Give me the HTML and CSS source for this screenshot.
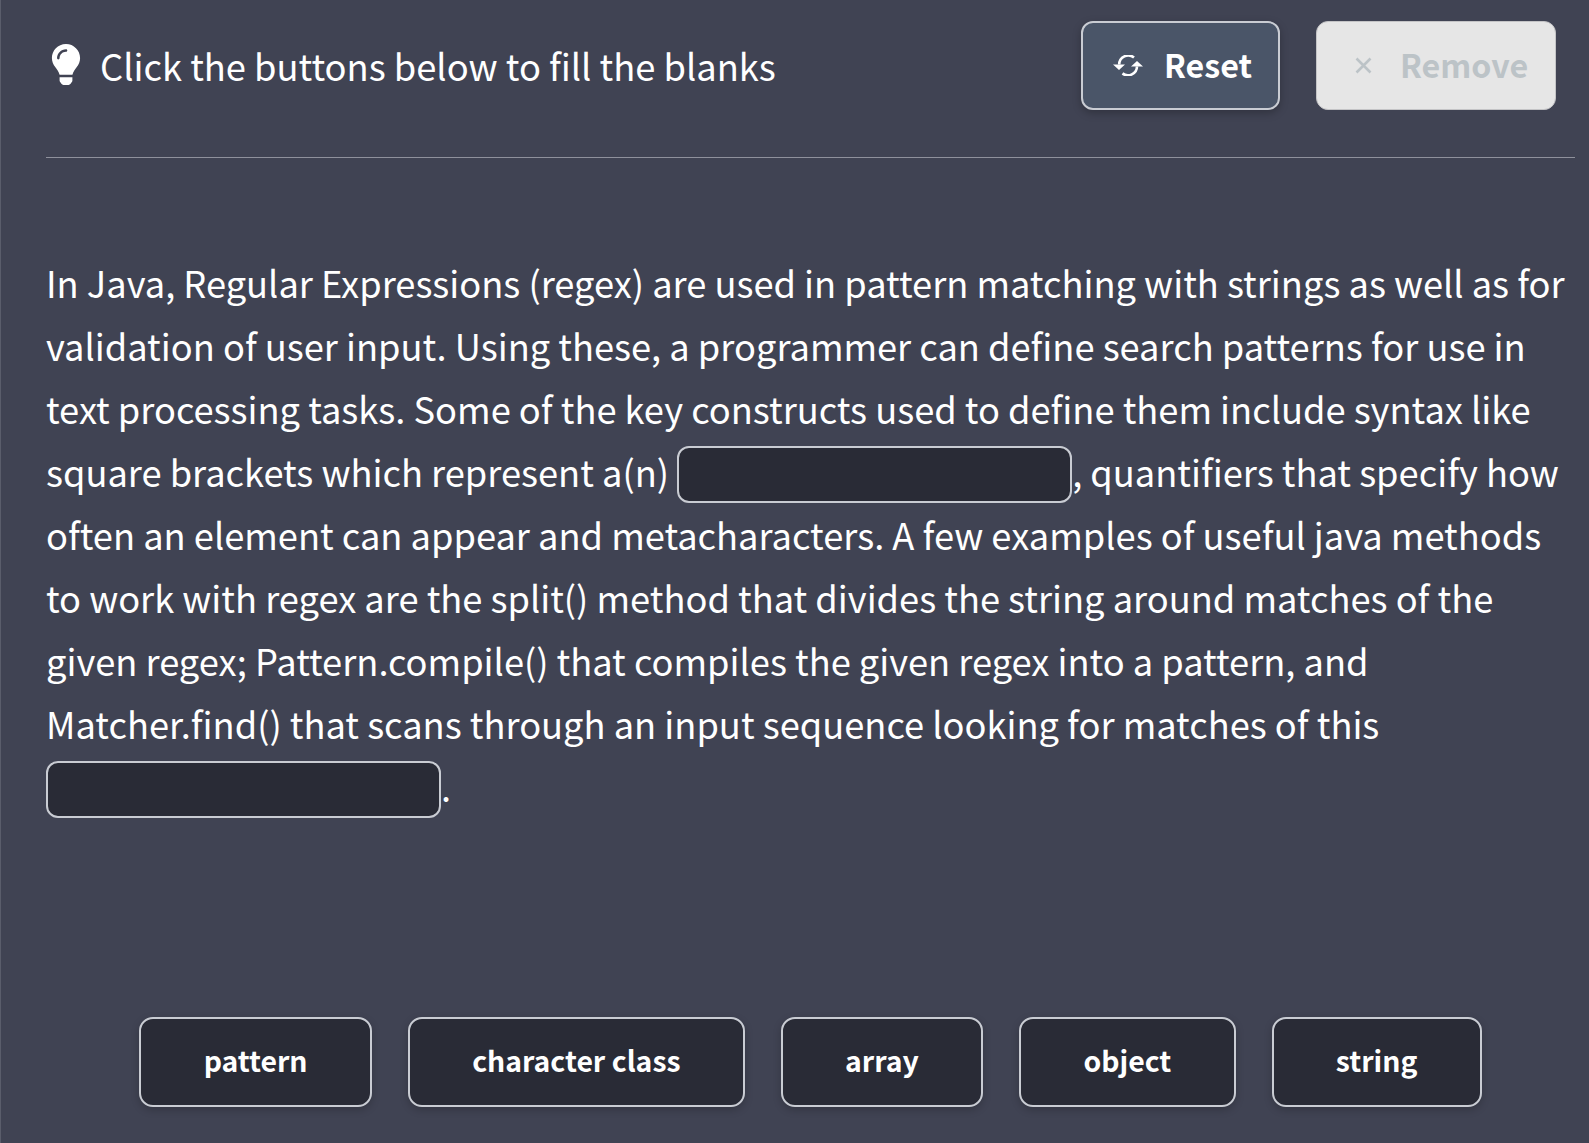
FILE: index.html
```html
<!DOCTYPE html>
<html lang="en">
<head>
  <meta charset="UTF-8" />
  <title>Fill in the blanks</title>
  <link rel="stylesheet" href="styles.css">
</head>
<body>
  <div class="exercise">
    <div class="toolbar">
      <div class="hint">
        <svg class="bulb" viewBox="0 0 352 512"><path d="M96.06 454.35c.01 6.29 1.87 12.45 5.36 17.69l17.09 25.69a31.99 31.99 0 0 0 26.64 14.28h61.71a31.99 31.99 0 0 0 26.64-14.28l17.09-25.69a31.989 31.989 0 0 0 5.36-17.69l.04-38.35H96.01l.05 38.35zM0 176c0 44.37 16.45 84.85 43.56 115.78 16.52 18.85 42.36 58.23 52.21 91.45.04.26.11.52.15.78h160.16c.04-.26.11-.51.15-.78 9.85-33.22 35.69-72.6 52.21-91.45C335.55 260.85 352 220.37 352 176 352 78.61 272.91-.3 175.45 0 73.44.31 0 82.97 0 176zm176-80c-44.11 0-80 35.89-80 80 0 8.84-7.16 16-16 16s-16-7.16-16-16c0-61.76 50.24-112 112-112 8.84 0 16 7.16 16 16s-7.16 16-16 16z"/></svg>
        <span>Click the buttons below to fill the blanks</span>
      </div>
      <div class="actions">
        <button class="action reset">
          <svg class="icon-sync" viewBox="0 0 30 21"><path d="M21 2.6A9 9 0 0 0 6.2 9.5"/><path d="M9.5 18.4A9 9 0 0 0 24 11.5"/><path class="solid" d="M0 9.5h12L6 15zM18 11.5h12L24 6z"/></svg>
          Reset
        </button>
        <button class="action remove" disabled>
          <svg class="icon-close" viewBox="0 0 17 17"><path d="M1.5 1.5l14 14M15.5 1.5l-14 14"/></svg>
          Remove
        </button>
      </div>
    </div>

    <p class="passage">In Java, Regular Expressions (regex) are used in pattern matching with strings as well as for validation of user input. Using these, a programmer can define search patterns for use in text processing tasks. Some of the key constructs used to define them include syntax like square brackets which represent a(n) <span class="blank"></span>, quantifiers that specify how often an element can appear and metacharacters. A few examples of useful java methods to work with regex are the split() method that divides the string around matches of the given regex; Pattern.compile() that compiles the given regex into a pattern, and Matcher.find() that scans through an input sequence looking for matches of this <span class="blank"></span>.</p>

    <div class="choices">
      <button class="choice">pattern</button>
      <button class="choice">character class</button>
      <button class="choice">array</button>
      <button class="choice">object</button>
      <button class="choice">string</button>
    </div>
  </div>
</body>
</html>
```
FILE: styles.css
```css
* {
  box-sizing: border-box;
}
body {
  margin: 0;
  background: #404353;
  color: white;
  font-family: "Noto Sans CJK SC", "Noto Sans", sans-serif;
}
.exercise {
  display: flex;
  flex-direction: column;
  height: 1143px;
  padding: 21px 14px 36px 45px;
  border-left: 1px solid #5a5d6b;
}
.toolbar {
  display: flex;
  justify-content: space-between;
  align-items: flex-start;
  height: 137px;
  border-bottom: 1px solid #8f919c;
}
.hint {
  display: flex;
  align-items: center;
  height: 87px;
  font-size: 36.3px;
}
.bulb {
  width: 30px;
  height: 41px;
  margin: 0 19px 0 5px;
  fill: white;
}
.actions {
  display: flex;
  gap: 36px;
  margin-right: 19px;
}
.action {
  display: flex;
  align-items: center;
  height: 89px;
  border-radius: 12px;
  font-family: inherit;
  font-size: 32.2px;
  font-weight: 700;
}
.action svg {
  flex-shrink: 0;
  margin-top: 4px;
  fill: none;
  stroke: currentColor;
}
.icon-sync {
  width: 30px;
  height: 21px;
  margin-right: 21px;
  stroke-width: 2.6;
}
.icon-sync .solid {
  fill: currentColor;
  stroke: none;
}
.icon-close {
  width: 17px;
  height: 17px;
  margin-right: 28px;
  stroke-width: 2.6;
}
.reset {
  width: 199px;
  padding: 0 0 4px 30px;
  background: #4a5568;
  border: 2px solid #c9ccd3;
  color: white;
  box-shadow: 0 3px 8px rgba(0,0,0,0.25);
}
.remove {
  width: 240px;
  padding: 0 0 4px 38px;
  background: #e6e6e6;
  border: 1px solid #c4c4c6;
  color: #bcc3c7;
}
.passage {
  margin: 93px 0 0;
  font-size: 36.25px;
  line-height: 63px;
}
.blank {
  display: inline-block;
  width: 395px;
  height: 57px;
  vertical-align: -15.5px;
  background: #292b36;
  border: 2px solid #c9ccd3;
  border-radius: 12px;
}
.choices {
  display: flex;
  justify-content: center;
  gap: 36px;
  margin-top: auto;
}
.choice {
  height: 90px;
  padding: 0 62.3px 6px;
  background: #292b36;
  border: 2px solid #c9ccd3;
  border-radius: 14px;
  color: white;
  font-family: inherit;
  font-size: 28.4px;
  font-weight: 700;
  box-shadow: 0 3px 8px rgba(0,0,0,0.2);
}
```
